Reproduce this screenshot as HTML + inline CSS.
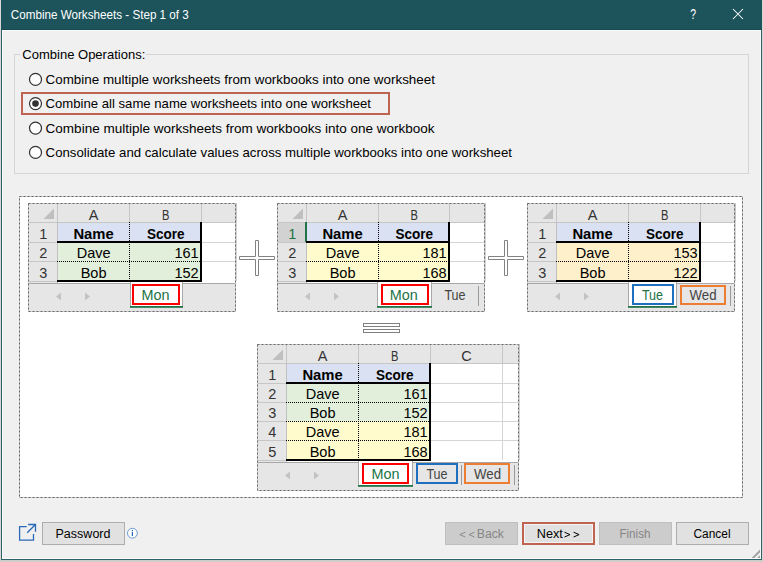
<!DOCTYPE html>
<html><head><meta charset="utf-8"><style>html,body{margin:0;padding:0;width:763px;height:562px;overflow:hidden;background:#d9d9d9}svg{display:block}</style></head>
<body><svg width="763" height="562" viewBox="0 0 763 562" font-family='"Liberation Sans", sans-serif'><rect x="0" y="0" width="763" height="562" fill="#d8d6d5" />
<rect x="0" y="560" width="763" height="2" fill="#cdcccb" />
<rect x="1" y="0" width="761" height="560" fill="#2d6368" />
<rect x="2" y="30" width="759" height="529" fill="#fcfaf9" />
<rect x="3" y="31" width="757" height="527" fill="#f0f0f0" />
<rect x="1" y="0" width="761" height="29" fill="#1d545c" />
<rect x="1" y="29" width="761" height="1" fill="#174a53" />
<text x="10.8" y="18.9" font-size="12.5" fill="#ffffff" text-anchor="start" font-weight="normal" textLength="178" lengthAdjust="spacingAndGlyphs" >Combine Worksheets - Step 1 of 3</text>
<text x="690.3" y="19" font-size="14.5" fill="#ffffff" text-anchor="start" font-weight="normal" textLength="5.8" lengthAdjust="spacingAndGlyphs" >?</text>
<path d="M733 9 L743 19 M743 9 L733 19" stroke="#ffffff" stroke-width="1.05" fill="none"/>
<rect x="14.5" y="54.5" width="734" height="119" fill="none" stroke="#d5d5d5" stroke-width="1" />
<rect x="20" y="48" width="126" height="12" fill="#f0f0f0" />
<text x="22.3" y="58.6" font-size="13" fill="#000" text-anchor="start" font-weight="normal" textLength="123" lengthAdjust="spacingAndGlyphs" >Combine Operations:</text>
<circle cx="35.5" cy="79.4" r="6" fill="#ffffff" stroke="#333333" stroke-width="1.2"/>
<text x="45.6" y="84" font-size="13" fill="#000" text-anchor="start" font-weight="normal" textLength="389.3" lengthAdjust="spacingAndGlyphs" >Combine multiple worksheets from workbooks into one worksheet</text>
<circle cx="35.5" cy="103.60000000000001" r="6" fill="#ffffff" stroke="#333333" stroke-width="1.2"/>
<circle cx="35.5" cy="103.60000000000001" r="3.3" fill="#333333"/>
<text x="45.6" y="108.2" font-size="13" fill="#000" text-anchor="start" font-weight="normal" textLength="325.4" lengthAdjust="spacingAndGlyphs" >Combine all same name worksheets into one worksheet</text>
<circle cx="35.5" cy="128.1" r="6" fill="#ffffff" stroke="#333333" stroke-width="1.2"/>
<text x="45.6" y="132.7" font-size="13" fill="#000" text-anchor="start" font-weight="normal" textLength="389" lengthAdjust="spacingAndGlyphs" >Combine multiple worksheets from workbooks into one workbook</text>
<circle cx="35.5" cy="152.4" r="6" fill="#ffffff" stroke="#333333" stroke-width="1.2"/>
<text x="45.6" y="157" font-size="13" fill="#000" text-anchor="start" font-weight="normal" textLength="466.4" lengthAdjust="spacingAndGlyphs" >Consolidate and calculate values across multiple workbooks into one worksheet</text>
<rect x="22" y="93" width="367" height="21" fill="none" stroke="#be6450" stroke-width="2" />
<rect x="19.5" y="196.5" width="723" height="301" fill="#ffffff" stroke="#cccccc" stroke-width="1" />
<rect x="19.5" y="196.5" width="723" height="301" fill="none" stroke="#686868" stroke-width="1" stroke-dasharray="2 2"/>
<rect x="28" y="203" width="208" height="109" fill="#ffffff" />
<rect x="28" y="203" width="208" height="19" fill="#e6e6e6" />
<rect x="28" y="203" width="29" height="80" fill="#e6e6e6" />
<rect x="57" y="222" width="144" height="20" fill="#d9e1f2" />
<rect x="57" y="242" width="144" height="19" fill="#e2efda" />
<rect x="57" y="261" width="144" height="20" fill="#e2efda" />
<line x1="201" y1="222.5" x2="236" y2="222.5" stroke="#d4d4d4" stroke-width="1" />
<line x1="201" y1="242.5" x2="236" y2="242.5" stroke="#d4d4d4" stroke-width="1" />
<line x1="201" y1="261.5" x2="236" y2="261.5" stroke="#d4d4d4" stroke-width="1" />
<line x1="236.5" y1="222" x2="236.5" y2="281" stroke="#d4d4d4" stroke-width="1" />
<line x1="57.5" y1="203" x2="57.5" y2="222" stroke="#c6c6c6" stroke-width="1" />
<line x1="129.5" y1="203" x2="129.5" y2="222" stroke="#c6c6c6" stroke-width="1" />
<line x1="201.5" y1="203" x2="201.5" y2="222" stroke="#c6c6c6" stroke-width="1" />
<line x1="236.5" y1="203" x2="236.5" y2="222" stroke="#c6c6c6" stroke-width="1" />
<line x1="28" y1="222.5" x2="236" y2="222.5" stroke="#c6c6c6" stroke-width="1" />
<line x1="28" y1="242.5" x2="57" y2="242.5" stroke="#c6c6c6" stroke-width="1" />
<line x1="28" y1="261.5" x2="57" y2="261.5" stroke="#c6c6c6" stroke-width="1" />
<line x1="28" y1="281.5" x2="57" y2="281.5" stroke="#c6c6c6" stroke-width="1" />
<line x1="57.5" y1="222" x2="57.5" y2="283" stroke="#c0c0c0" stroke-width="1" />
<path d="M54 219 L43.5 219 L54 208.5 Z" fill="#bfbfbf"/>
<text x="93.6" y="219.7" font-size="14.5" fill="#333333" text-anchor="middle" font-weight="normal" >A</text>
<text x="165.6" y="219.7" font-size="14.5" fill="#333333" text-anchor="middle" font-weight="normal" textLength="7.4" lengthAdjust="spacingAndGlyphs" >B</text>
<text x="43.3" y="239.3" font-size="14.5" fill="#333333" text-anchor="middle" font-weight="normal" >1</text>
<text x="43.3" y="258.3" font-size="14.5" fill="#333333" text-anchor="middle" font-weight="normal" >2</text>
<text x="43.3" y="278.3" font-size="14.5" fill="#333333" text-anchor="middle" font-weight="normal" >3</text>
<line x1="129.5" y1="222" x2="129.5" y2="281" stroke="#000000" stroke-width="1" stroke-dasharray="1 1"/>
<line x1="57" y1="261.5" x2="201" y2="261.5" stroke="#000000" stroke-width="1" stroke-dasharray="1 1"/>
<line x1="57" y1="242" x2="202" y2="242" stroke="#000" stroke-width="2" />
<line x1="57" y1="281" x2="202" y2="281" stroke="#000" stroke-width="2" />
<line x1="201" y1="222" x2="201" y2="282" stroke="#000" stroke-width="2" />
<text x="93.6" y="239.3" font-size="14.5" fill="#000" text-anchor="middle" font-weight="bold" textLength="40.3" lengthAdjust="spacingAndGlyphs" >Name</text>
<text x="165.8" y="239.3" font-size="14.5" fill="#000" text-anchor="middle" font-weight="bold" textLength="37.6" lengthAdjust="spacingAndGlyphs" >Score</text>
<text x="93.6" y="258.3" font-size="14.5" fill="#000" text-anchor="middle" font-weight="normal" >Dave</text>
<text x="198.7" y="258.3" font-size="14.5" fill="#000" text-anchor="end" font-weight="normal" >161</text>
<text x="93.6" y="278.3" font-size="14.5" fill="#000" text-anchor="middle" font-weight="normal" >Bob</text>
<text x="198.7" y="278.3" font-size="14.5" fill="#000" text-anchor="end" font-weight="normal" >152</text>
<rect x="28" y="284" width="208" height="28" fill="#e6e6e6" />
<line x1="28" y1="283.5" x2="236" y2="283.5" stroke="#a8a8a8" stroke-width="1" />
<path d="M56 296.5 L61 292.5 L61 300.5 Z" fill="#c3c3c3"/>
<path d="M90 296.5 L85 292.5 L85 300.5 Z" fill="#c3c3c3"/>
<rect x="130" y="282" width="53" height="25" fill="#ffffff" />
<line x1="130.5" y1="282" x2="130.5" y2="307" stroke="#a8a8a8" stroke-width="1" />
<line x1="182.5" y1="282" x2="182.5" y2="307" stroke="#a8a8a8" stroke-width="1" />
<rect x="130" y="306" width="53" height="1.8" fill="#217346" />
<rect x="133" y="285" width="46" height="19" fill="none" stroke="#ff0000" stroke-width="2" />
<text x="155.5" y="299.8" font-size="14.5" fill="#217346" text-anchor="middle" font-weight="normal" textLength="28" lengthAdjust="spacingAndGlyphs" >Mon</text>
<rect x="28.5" y="203.5" width="207" height="108" fill="none" stroke="#cccccc" stroke-width="1" />
<rect x="28.5" y="203.5" width="207" height="108" fill="none" stroke="#6a6a6a" stroke-width="1" stroke-dasharray="2 2"/>
<rect x="277" y="203" width="208" height="109" fill="#ffffff" />
<rect x="277" y="203" width="208" height="19" fill="#e6e6e6" />
<rect x="277" y="203" width="29" height="80" fill="#e6e6e6" />
<rect x="306" y="222" width="143" height="20" fill="#d9e1f2" />
<rect x="306" y="242" width="143" height="19" fill="#fffbcc" />
<rect x="306" y="261" width="143" height="20" fill="#fffbcc" />
<line x1="449" y1="222.5" x2="485" y2="222.5" stroke="#d4d4d4" stroke-width="1" />
<line x1="449" y1="242.5" x2="485" y2="242.5" stroke="#d4d4d4" stroke-width="1" />
<line x1="449" y1="261.5" x2="485" y2="261.5" stroke="#d4d4d4" stroke-width="1" />
<line x1="485.5" y1="222" x2="485.5" y2="281" stroke="#d4d4d4" stroke-width="1" />
<line x1="306.5" y1="203" x2="306.5" y2="222" stroke="#c6c6c6" stroke-width="1" />
<line x1="378.5" y1="203" x2="378.5" y2="222" stroke="#c6c6c6" stroke-width="1" />
<line x1="449.5" y1="203" x2="449.5" y2="222" stroke="#c6c6c6" stroke-width="1" />
<line x1="485.5" y1="203" x2="485.5" y2="222" stroke="#c6c6c6" stroke-width="1" />
<line x1="277" y1="222.5" x2="485" y2="222.5" stroke="#c6c6c6" stroke-width="1" />
<line x1="277" y1="242.5" x2="306" y2="242.5" stroke="#c6c6c6" stroke-width="1" />
<line x1="277" y1="261.5" x2="306" y2="261.5" stroke="#c6c6c6" stroke-width="1" />
<line x1="277" y1="281.5" x2="306" y2="281.5" stroke="#c6c6c6" stroke-width="1" />
<line x1="306.5" y1="222" x2="306.5" y2="283" stroke="#c0c0c0" stroke-width="1" />
<rect x="277" y="223" width="29" height="19" fill="#d2d2d2" />
<rect x="305" y="222" width="2" height="20" fill="#217346" />
<path d="M303 219 L292.5 219 L303 208.5 Z" fill="#bfbfbf"/>
<text x="342.6" y="219.7" font-size="14.5" fill="#333333" text-anchor="middle" font-weight="normal" >A</text>
<text x="414.1" y="219.7" font-size="14.5" fill="#333333" text-anchor="middle" font-weight="normal" textLength="7.4" lengthAdjust="spacingAndGlyphs" >B</text>
<text x="292.3" y="239.3" font-size="14.5" fill="#217346" text-anchor="middle" font-weight="normal" >1</text>
<text x="292.3" y="258.3" font-size="14.5" fill="#333333" text-anchor="middle" font-weight="normal" >2</text>
<text x="292.3" y="278.3" font-size="14.5" fill="#333333" text-anchor="middle" font-weight="normal" >3</text>
<line x1="378.5" y1="222" x2="378.5" y2="281" stroke="#000000" stroke-width="1" stroke-dasharray="1 1"/>
<line x1="306" y1="261.5" x2="449" y2="261.5" stroke="#000000" stroke-width="1" stroke-dasharray="1 1"/>
<line x1="306" y1="242" x2="450" y2="242" stroke="#000" stroke-width="2" />
<line x1="306" y1="281" x2="450" y2="281" stroke="#000" stroke-width="2" />
<line x1="449" y1="222" x2="449" y2="282" stroke="#000" stroke-width="2" />
<text x="342.6" y="239.3" font-size="14.5" fill="#000" text-anchor="middle" font-weight="bold" textLength="40.3" lengthAdjust="spacingAndGlyphs" >Name</text>
<text x="414.3" y="239.3" font-size="14.5" fill="#000" text-anchor="middle" font-weight="bold" textLength="37.6" lengthAdjust="spacingAndGlyphs" >Score</text>
<text x="342.6" y="258.3" font-size="14.5" fill="#000" text-anchor="middle" font-weight="normal" >Dave</text>
<text x="446.7" y="258.3" font-size="14.5" fill="#000" text-anchor="end" font-weight="normal" >181</text>
<text x="342.6" y="278.3" font-size="14.5" fill="#000" text-anchor="middle" font-weight="normal" >Bob</text>
<text x="446.7" y="278.3" font-size="14.5" fill="#000" text-anchor="end" font-weight="normal" >168</text>
<rect x="277" y="284" width="208" height="28" fill="#e6e6e6" />
<line x1="277" y1="283.5" x2="485" y2="283.5" stroke="#a8a8a8" stroke-width="1" />
<path d="M305 296.5 L310 292.5 L310 300.5 Z" fill="#c3c3c3"/>
<path d="M339 296.5 L334 292.5 L334 300.5 Z" fill="#c3c3c3"/>
<rect x="377" y="282" width="55" height="25" fill="#ffffff" />
<line x1="377.5" y1="282" x2="377.5" y2="307" stroke="#a8a8a8" stroke-width="1" />
<line x1="431.5" y1="282" x2="431.5" y2="307" stroke="#a8a8a8" stroke-width="1" />
<rect x="377" y="306" width="55" height="1.8" fill="#217346" />
<rect x="382" y="285" width="46" height="19" fill="none" stroke="#ff0000" stroke-width="2" />
<text x="403.8" y="299.8" font-size="14.5" fill="#217346" text-anchor="middle" font-weight="normal" textLength="28" lengthAdjust="spacingAndGlyphs" >Mon</text>
<line x1="478.5" y1="286" x2="478.5" y2="306" stroke="#9a9a9a" stroke-width="1" />
<text x="455.0" y="299.8" font-size="14.5" fill="#444444" text-anchor="middle" font-weight="normal" textLength="21.2" lengthAdjust="spacingAndGlyphs" >Tue</text>
<rect x="277.5" y="203.5" width="207" height="108" fill="none" stroke="#cccccc" stroke-width="1" />
<rect x="277.5" y="203.5" width="207" height="108" fill="none" stroke="#6a6a6a" stroke-width="1" stroke-dasharray="2 2"/>
<rect x="527" y="203" width="208" height="109" fill="#ffffff" />
<rect x="527" y="203" width="208" height="19" fill="#e6e6e6" />
<rect x="527" y="203" width="29" height="80" fill="#e6e6e6" />
<rect x="556" y="222" width="144" height="20" fill="#d9e1f2" />
<rect x="556" y="242" width="144" height="19" fill="#fff0cc" />
<rect x="556" y="261" width="144" height="20" fill="#fff0cc" />
<line x1="700" y1="222.5" x2="735" y2="222.5" stroke="#d4d4d4" stroke-width="1" />
<line x1="700" y1="242.5" x2="735" y2="242.5" stroke="#d4d4d4" stroke-width="1" />
<line x1="700" y1="261.5" x2="735" y2="261.5" stroke="#d4d4d4" stroke-width="1" />
<line x1="735.5" y1="222" x2="735.5" y2="281" stroke="#d4d4d4" stroke-width="1" />
<line x1="556.5" y1="203" x2="556.5" y2="222" stroke="#c6c6c6" stroke-width="1" />
<line x1="628.5" y1="203" x2="628.5" y2="222" stroke="#c6c6c6" stroke-width="1" />
<line x1="700.5" y1="203" x2="700.5" y2="222" stroke="#c6c6c6" stroke-width="1" />
<line x1="735.5" y1="203" x2="735.5" y2="222" stroke="#c6c6c6" stroke-width="1" />
<line x1="527" y1="222.5" x2="735" y2="222.5" stroke="#c6c6c6" stroke-width="1" />
<line x1="527" y1="242.5" x2="556" y2="242.5" stroke="#c6c6c6" stroke-width="1" />
<line x1="527" y1="261.5" x2="556" y2="261.5" stroke="#c6c6c6" stroke-width="1" />
<line x1="527" y1="281.5" x2="556" y2="281.5" stroke="#c6c6c6" stroke-width="1" />
<line x1="556.5" y1="222" x2="556.5" y2="283" stroke="#c0c0c0" stroke-width="1" />
<path d="M553 219 L542.5 219 L553 208.5 Z" fill="#bfbfbf"/>
<text x="592.6" y="219.7" font-size="14.5" fill="#333333" text-anchor="middle" font-weight="normal" >A</text>
<text x="664.6" y="219.7" font-size="14.5" fill="#333333" text-anchor="middle" font-weight="normal" textLength="7.4" lengthAdjust="spacingAndGlyphs" >B</text>
<text x="542.3" y="239.3" font-size="14.5" fill="#333333" text-anchor="middle" font-weight="normal" >1</text>
<text x="542.3" y="258.3" font-size="14.5" fill="#333333" text-anchor="middle" font-weight="normal" >2</text>
<text x="542.3" y="278.3" font-size="14.5" fill="#333333" text-anchor="middle" font-weight="normal" >3</text>
<line x1="628.5" y1="222" x2="628.5" y2="281" stroke="#000000" stroke-width="1" stroke-dasharray="1 1"/>
<line x1="556" y1="261.5" x2="700" y2="261.5" stroke="#000000" stroke-width="1" stroke-dasharray="1 1"/>
<line x1="556" y1="242" x2="701" y2="242" stroke="#000" stroke-width="2" />
<line x1="556" y1="281" x2="701" y2="281" stroke="#000" stroke-width="2" />
<line x1="700" y1="222" x2="700" y2="282" stroke="#000" stroke-width="2" />
<text x="592.6" y="239.3" font-size="14.5" fill="#000" text-anchor="middle" font-weight="bold" textLength="40.3" lengthAdjust="spacingAndGlyphs" >Name</text>
<text x="664.8" y="239.3" font-size="14.5" fill="#000" text-anchor="middle" font-weight="bold" textLength="37.6" lengthAdjust="spacingAndGlyphs" >Score</text>
<text x="592.6" y="258.3" font-size="14.5" fill="#000" text-anchor="middle" font-weight="normal" >Dave</text>
<text x="697.7" y="258.3" font-size="14.5" fill="#000" text-anchor="end" font-weight="normal" >153</text>
<text x="592.6" y="278.3" font-size="14.5" fill="#000" text-anchor="middle" font-weight="normal" >Bob</text>
<text x="697.7" y="278.3" font-size="14.5" fill="#000" text-anchor="end" font-weight="normal" >122</text>
<rect x="527" y="284" width="208" height="28" fill="#e6e6e6" />
<line x1="527" y1="283.5" x2="735" y2="283.5" stroke="#a8a8a8" stroke-width="1" />
<path d="M555 296.5 L560 292.5 L560 300.5 Z" fill="#c3c3c3"/>
<path d="M589 296.5 L584 292.5 L584 300.5 Z" fill="#c3c3c3"/>
<rect x="628" y="282" width="49" height="25" fill="#ffffff" />
<line x1="628.5" y1="282" x2="628.5" y2="307" stroke="#a8a8a8" stroke-width="1" />
<line x1="676.5" y1="282" x2="676.5" y2="307" stroke="#a8a8a8" stroke-width="1" />
<rect x="628" y="306" width="49" height="1.8" fill="#217346" />
<rect x="633" y="285" width="40" height="19" fill="none" stroke="#1f6fbf" stroke-width="2" />
<text x="652.5" y="299.8" font-size="14.5" fill="#217346" text-anchor="middle" font-weight="normal" textLength="21.2" lengthAdjust="spacingAndGlyphs" >Tue</text>
<rect x="681" y="286" width="44" height="18" fill="none" stroke="#ed7d31" stroke-width="2" />
<line x1="730.5" y1="286" x2="730.5" y2="306" stroke="#9a9a9a" stroke-width="1" />
<text x="703.0" y="299.8" font-size="14.5" fill="#444444" text-anchor="middle" font-weight="normal" textLength="27" lengthAdjust="spacingAndGlyphs" >Wed</text>
<rect x="527.5" y="203.5" width="207" height="108" fill="none" stroke="#cccccc" stroke-width="1" />
<rect x="527.5" y="203.5" width="207" height="108" fill="none" stroke="#6a6a6a" stroke-width="1" stroke-dasharray="2 2"/>
<rect x="257" y="344" width="262" height="147" fill="#ffffff" />
<rect x="257" y="344" width="262" height="19" fill="#e6e6e6" />
<rect x="257" y="344" width="29" height="118" fill="#e6e6e6" />
<rect x="286" y="363" width="144" height="20" fill="#d9e1f2" />
<rect x="286" y="383" width="144" height="19" fill="#e2efda" />
<rect x="286" y="402" width="144" height="19" fill="#e2efda" />
<rect x="286" y="421" width="144" height="19" fill="#fffbcc" />
<rect x="286" y="440" width="144" height="20" fill="#fffbcc" />
<line x1="430" y1="363.5" x2="519" y2="363.5" stroke="#d4d4d4" stroke-width="1" />
<line x1="430" y1="383.5" x2="519" y2="383.5" stroke="#d4d4d4" stroke-width="1" />
<line x1="430" y1="402.5" x2="519" y2="402.5" stroke="#d4d4d4" stroke-width="1" />
<line x1="430" y1="421.5" x2="519" y2="421.5" stroke="#d4d4d4" stroke-width="1" />
<line x1="430" y1="440.5" x2="519" y2="440.5" stroke="#d4d4d4" stroke-width="1" />
<line x1="502.5" y1="363" x2="502.5" y2="460" stroke="#d4d4d4" stroke-width="1" />
<line x1="519.5" y1="363" x2="519.5" y2="460" stroke="#d4d4d4" stroke-width="1" />
<line x1="286.5" y1="344" x2="286.5" y2="363" stroke="#c6c6c6" stroke-width="1" />
<line x1="358.5" y1="344" x2="358.5" y2="363" stroke="#c6c6c6" stroke-width="1" />
<line x1="430.5" y1="344" x2="430.5" y2="363" stroke="#c6c6c6" stroke-width="1" />
<line x1="502.5" y1="344" x2="502.5" y2="363" stroke="#c6c6c6" stroke-width="1" />
<line x1="519.5" y1="344" x2="519.5" y2="363" stroke="#c6c6c6" stroke-width="1" />
<line x1="257" y1="363.5" x2="519" y2="363.5" stroke="#c6c6c6" stroke-width="1" />
<line x1="257" y1="383.5" x2="286" y2="383.5" stroke="#c6c6c6" stroke-width="1" />
<line x1="257" y1="402.5" x2="286" y2="402.5" stroke="#c6c6c6" stroke-width="1" />
<line x1="257" y1="421.5" x2="286" y2="421.5" stroke="#c6c6c6" stroke-width="1" />
<line x1="257" y1="440.5" x2="286" y2="440.5" stroke="#c6c6c6" stroke-width="1" />
<line x1="257" y1="460.5" x2="286" y2="460.5" stroke="#c6c6c6" stroke-width="1" />
<line x1="286.5" y1="363" x2="286.5" y2="462" stroke="#c0c0c0" stroke-width="1" />
<path d="M283 360 L272.5 360 L283 349.5 Z" fill="#bfbfbf"/>
<text x="322.6" y="360.7" font-size="14.5" fill="#333333" text-anchor="middle" font-weight="normal" >A</text>
<text x="394.6" y="360.7" font-size="14.5" fill="#333333" text-anchor="middle" font-weight="normal" textLength="7.4" lengthAdjust="spacingAndGlyphs" >B</text>
<text x="466.6" y="360.7" font-size="14.5" fill="#333333" text-anchor="middle" font-weight="normal" >C</text>
<text x="272.3" y="380.3" font-size="14.5" fill="#333333" text-anchor="middle" font-weight="normal" >1</text>
<text x="272.3" y="399.3" font-size="14.5" fill="#333333" text-anchor="middle" font-weight="normal" >2</text>
<text x="272.3" y="418.3" font-size="14.5" fill="#333333" text-anchor="middle" font-weight="normal" >3</text>
<text x="272.3" y="437.3" font-size="14.5" fill="#333333" text-anchor="middle" font-weight="normal" >4</text>
<text x="272.3" y="457.3" font-size="14.5" fill="#333333" text-anchor="middle" font-weight="normal" >5</text>
<line x1="358.5" y1="363" x2="358.5" y2="460" stroke="#000000" stroke-width="1" stroke-dasharray="1 1"/>
<line x1="286" y1="402.5" x2="430" y2="402.5" stroke="#000000" stroke-width="1" stroke-dasharray="1 1"/>
<line x1="286" y1="421.5" x2="430" y2="421.5" stroke="#000000" stroke-width="1" stroke-dasharray="1 1"/>
<line x1="286" y1="440.5" x2="430" y2="440.5" stroke="#000000" stroke-width="1" stroke-dasharray="1 1"/>
<line x1="286" y1="383" x2="431" y2="383" stroke="#000" stroke-width="2" />
<line x1="286" y1="460" x2="431" y2="460" stroke="#000" stroke-width="2" />
<line x1="430" y1="363" x2="430" y2="461" stroke="#000" stroke-width="2" />
<text x="322.6" y="380.3" font-size="14.5" fill="#000" text-anchor="middle" font-weight="bold" textLength="40.3" lengthAdjust="spacingAndGlyphs" >Name</text>
<text x="394.8" y="380.3" font-size="14.5" fill="#000" text-anchor="middle" font-weight="bold" textLength="37.6" lengthAdjust="spacingAndGlyphs" >Score</text>
<text x="322.6" y="399.3" font-size="14.5" fill="#000" text-anchor="middle" font-weight="normal" >Dave</text>
<text x="427.7" y="399.3" font-size="14.5" fill="#000" text-anchor="end" font-weight="normal" >161</text>
<text x="322.6" y="418.3" font-size="14.5" fill="#000" text-anchor="middle" font-weight="normal" >Bob</text>
<text x="427.7" y="418.3" font-size="14.5" fill="#000" text-anchor="end" font-weight="normal" >152</text>
<text x="322.6" y="437.3" font-size="14.5" fill="#000" text-anchor="middle" font-weight="normal" >Dave</text>
<text x="427.7" y="437.3" font-size="14.5" fill="#000" text-anchor="end" font-weight="normal" >181</text>
<text x="322.6" y="457.3" font-size="14.5" fill="#000" text-anchor="middle" font-weight="normal" >Bob</text>
<text x="427.7" y="457.3" font-size="14.5" fill="#000" text-anchor="end" font-weight="normal" >168</text>
<rect x="257" y="463" width="262" height="28" fill="#e6e6e6" />
<line x1="257" y1="462.5" x2="519" y2="462.5" stroke="#a8a8a8" stroke-width="1" />
<path d="M285 475.5 L290 471.5 L290 479.5 Z" fill="#c3c3c3"/>
<path d="M319 475.5 L314 471.5 L314 479.5 Z" fill="#c3c3c3"/>
<rect x="358" y="461" width="55" height="25" fill="#ffffff" />
<line x1="358.5" y1="461" x2="358.5" y2="486" stroke="#a8a8a8" stroke-width="1" />
<line x1="412.5" y1="461" x2="412.5" y2="486" stroke="#a8a8a8" stroke-width="1" />
<rect x="358" y="485" width="55" height="1.8" fill="#217346" />
<rect x="363" y="464" width="45" height="19" fill="none" stroke="#ff0000" stroke-width="2" />
<text x="385.5" y="478.8" font-size="14.5" fill="#217346" text-anchor="middle" font-weight="normal" textLength="28" lengthAdjust="spacingAndGlyphs" >Mon</text>
<rect x="417" y="464" width="40" height="19" fill="none" stroke="#1f6fbf" stroke-width="2" />
<line x1="461.5" y1="465" x2="461.5" y2="485" stroke="#9a9a9a" stroke-width="1" />
<text x="437.0" y="478.8" font-size="14.5" fill="#444444" text-anchor="middle" font-weight="normal" textLength="21.2" lengthAdjust="spacingAndGlyphs" >Tue</text>
<rect x="465" y="464" width="44" height="19" fill="none" stroke="#ed7d31" stroke-width="2" />
<line x1="514.5" y1="465" x2="514.5" y2="485" stroke="#9a9a9a" stroke-width="1" />
<text x="487.5" y="478.8" font-size="14.5" fill="#444444" text-anchor="middle" font-weight="normal" textLength="27" lengthAdjust="spacingAndGlyphs" >Wed</text>
<rect x="257.5" y="344.5" width="261" height="146" fill="none" stroke="#cccccc" stroke-width="1" />
<rect x="257.5" y="344.5" width="261" height="146" fill="none" stroke="#6a6a6a" stroke-width="1" stroke-dasharray="2 2"/>
<path d="M255.5 240.5 H258.5 V256.5 H274.5 V259.5 H258.5 V275.5 H255.5 V259.5 H239.5 V256.5 H255.5 Z" fill="#ffffff" stroke="#828282" stroke-width="1"/>
<path d="M504.5 240.5 H507.5 V256.5 H523.5 V259.5 H507.5 V275.5 H504.5 V259.5 H488.5 V256.5 H504.5 Z" fill="#ffffff" stroke="#828282" stroke-width="1"/>
<rect x="363.5" y="323.5" width="36" height="3" fill="#ffffff" stroke="#808080" stroke-width="1" />
<rect x="363.5" y="329.5" width="36" height="3" fill="#ffffff" stroke="#808080" stroke-width="1" />
<path d="M26.7 526.6 H19.6 V540.1 H33.5 V534.1 M27.2 532.7 L35.2 524.7 M28.1 524.5 H35.5 V531.8" stroke="#2a69b6" stroke-width="1.3" fill="none"/>
<rect x="42.5" y="522.5" width="82" height="22" fill="#e1e1e1" stroke="#adadad" stroke-width="1" />
<text x="55.5" y="537.7" font-size="12.5" fill="#000" text-anchor="start" font-weight="normal" textLength="55" lengthAdjust="spacingAndGlyphs" >Password</text>
<circle cx="132.4" cy="533.2" r="4.9" fill="#ffffff" stroke="#6a9ad6" stroke-width="1"/>
<path d="M132.4 531.8 v4.3 M132.4 529.9 v1" stroke="#2a69b6" stroke-width="1.2"/>
<rect x="445.5" y="522.5" width="72" height="22" fill="#cccccc" stroke="#bfbfbf" stroke-width="1" />
<path d="M465.3 532.2 L459.8 534.6 L465.3 537" stroke="#8a8a8a" stroke-width="1" fill="none"/>
<path d="M474.5 532.2 L469 534.6 L474.5 537" stroke="#8a8a8a" stroke-width="1" fill="none"/>
<text x="476.8" y="537.8" font-size="12.5" fill="#858585" text-anchor="start" font-weight="normal" textLength="27.2" lengthAdjust="spacingAndGlyphs" >Back</text>
<rect x="523" y="523" width="71" height="21" fill="#e1e1e1" stroke="#be6450" stroke-width="2" />
<rect x="524.5" y="524.5" width="68" height="18" fill="none" stroke="#f4f4f4" stroke-width="1" />
<text x="536.8" y="537.8" font-size="12.5" fill="#000" text-anchor="start" font-weight="normal" textLength="26" lengthAdjust="spacingAndGlyphs" >Next</text>
<path d="M564.5 532.2 L570.0 534.6 L564.5 537" stroke="#000" stroke-width="1" fill="none"/>
<path d="M573.6 532.2 L579.1 534.6 L573.6 537" stroke="#000" stroke-width="1" fill="none"/>
<rect x="599.5" y="522.5" width="72" height="22" fill="#cccccc" stroke="#bfbfbf" stroke-width="1" />
<text x="619.4" y="537.8" font-size="12.5" fill="#858585" text-anchor="start" font-weight="normal" textLength="31.1" lengthAdjust="spacingAndGlyphs" >Finish</text>
<rect x="676.5" y="522.5" width="72" height="22" fill="#e1e1e1" stroke="#adadad" stroke-width="1" />
<text x="693.5" y="537.8" font-size="12.5" fill="#000" text-anchor="start" font-weight="normal" textLength="37.1" lengthAdjust="spacingAndGlyphs" >Cancel</text>
<path d="M751.5 558 L760 549.5 L760 552.2 L754.2 558 Z M757.2 558 L760 555.2 L760 558 Z" fill="#a0a0a0"/></svg></body></html>
